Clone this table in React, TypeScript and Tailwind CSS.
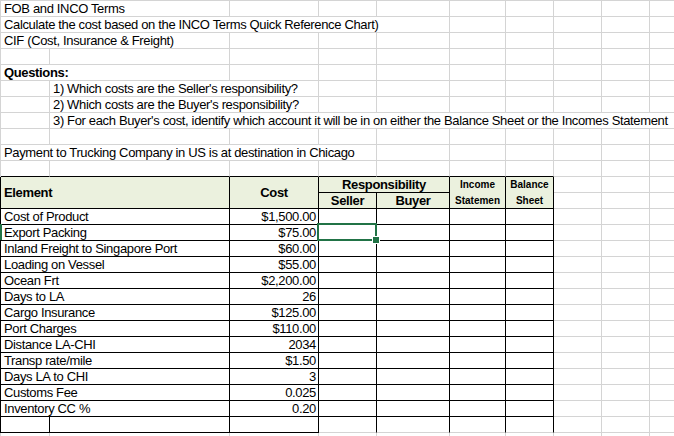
import clsx from "clsx";

// column template: A..I fixed, J takes the rest (widths include the right gridline)
const GRID = "grid grid-cols-[49px_180px_89px_58px_73px_56px_48px_48px_48px_1fr]";

const SPAN: Record<number, string> = {
  1: "col-span-1",
  2: "col-span-2",
  3: "col-span-3",
  4: "col-span-4",
  5: "col-span-5",
  9: "col-span-9",
};

type Cell = { span?: number; text?: string; bold?: boolean; blackBottom?: boolean };

const ITEMS: [string, string][] = [
  ["Cost of Product", "$1,500.00"],
  ["Export Packing", "$75.00"],
  ["Inland Freight to Singapore Port", "$60.00"],
  ["Loading on Vessel", "$55.00"],
  ["Ocean Frt", "$2,200.00"],
  ["Days to LA", "26"],
  ["Cargo Insurance", "$125.00"],
  ["Port Charges", "$110.00"],
  ["Distance LA-CHI", "2034"],
  ["Transp rate/mile", "$1.50"],
  ["Days LA to CHI", "3"],
  ["Customs Fee", "0.025"],
  ["Inventory CC %", "0.20"],
];

function TextRow({ cells = [], blackBottomTo = 0 }: { cells?: Cell[]; blackBottomTo?: number }) {
  const used = cells.reduce((n, c) => n + (c.span ?? 1), 0);
  const rest: Cell[] = Array.from({ length: 10 - used }, () => ({}));
  return (
    <div className={clsx(GRID, "h-[16px] border-l border-[#d4d4d4]")}>
      {[...cells, ...rest].map((c, i) => (
        <div
          key={i}
          className={clsx(
            "overflow-hidden whitespace-nowrap border-r border-b border-[#d4d4d4] pl-[3px] leading-[15px] last:border-r-0",
            SPAN[c.span ?? 1],
            c.bold && "font-bold",
            i < blackBottomTo && "border-b-black"
          )}
        >
          {c.text}
        </div>
      ))}
    </div>
  );
}

function GrayCells() {
  return (
    <>
      <div className="border-r border-b border-[#d4d4d4]" />
      <div className="border-r border-b border-[#d4d4d4]" />
      <div className="border-b border-[#d4d4d4]" />
    </>
  );
}

function DataRow({ label, cost }: { label: string; cost: string }) {
  return (
    <div className={clsx(GRID, "h-[16px] border-l border-black")}>
      <div className="col-span-2 overflow-hidden whitespace-nowrap border-r border-b border-black pl-[3px] leading-[15px]">
        {label}
      </div>
      <div className="border-r border-b border-black pr-[2px] text-right leading-[15px]">{cost}</div>
      <div className="border-r border-b border-black" />
      <div className="border-r border-b border-black" />
      <div className="border-r border-b border-black" />
      <div className="border-r border-b border-black" />
      <GrayCells />
    </div>
  );
}

function HeaderRows() {
  const head = "flex items-center border-r border-b border-black bg-[#ebf1de] font-bold";
  return (
    <div className={clsx(GRID, "grid-rows-[16px_16px] border-l border-black")}>
      <div className={clsx(head, "col-span-2 row-span-2 pl-[3px]")}>Element</div>
      <div className={clsx(head, "row-span-2 justify-center")}>Cost</div>
      <div className={clsx(head, "col-span-2 justify-center leading-[15px]")}>Responsibility</div>
      <div className={clsx(head, "col-start-6 row-span-2 flex-col justify-center text-[10px] leading-[16px] tracking-normal")}>
        <span>Income</span>
        <span className="w-full overflow-hidden whitespace-nowrap text-center">Statemen</span>
      </div>
      <div className={clsx(head, "col-start-7 row-span-2 flex-col justify-center text-[10px] leading-[16px] tracking-normal")}>
        <span>Balance</span>
        <span>Sheet</span>
      </div>
      <div className="col-start-8 row-start-1 border-r border-b border-[#d4d4d4]" />
      <div className="col-start-9 row-start-1 border-r border-b border-[#d4d4d4]" />
      <div className="col-start-10 row-start-1 border-b border-[#d4d4d4]" />
      <div className={clsx(head, "col-start-4 row-start-2 justify-center leading-[15px]")}>Seller</div>
      <div className={clsx(head, "col-start-5 row-start-2 justify-center leading-[15px]")}>Buyer</div>
      <div className="col-start-8 row-start-2 border-r border-b border-[#d4d4d4]" />
      <div className="col-start-9 row-start-2 border-r border-b border-[#d4d4d4]" />
      <div className="col-start-10 row-start-2 border-b border-[#d4d4d4]" />
    </div>
  );
}

export default function App() {
  return (
    <div className="relative h-[436px] w-[674px] overflow-hidden bg-white font-['Liberation_Sans',Arial,sans-serif] text-[13px] tracking-[-0.35px] text-black">
      <div className="border-t border-[#d4d4d4]">
        <TextRow cells={[{ span: 2, text: "FOB and INCO Terms" }]} />
        <TextRow cells={[{ span: 5, text: "Calculate the cost based on the INCO Terms Quick Reference Chart)" }]} />
        <TextRow cells={[{ span: 2, text: "CIF (Cost, Insurance & Freight)" }]} />
        <TextRow />
        <TextRow cells={[{ span: 2, text: "Questions:", bold: true }]} />
        <TextRow cells={[{}, { span: 2, text: "1) Which costs are the Seller's responsibility?" }]} />
        <TextRow cells={[{}, { span: 2, text: "2) Which costs are the Buyer's responsibility?" }]} />
        <TextRow
          cells={[
            {},
            {
              span: 9,
              text: "3) For each Buyer's cost, identify which account it will be in on either the Balance Sheet or the Incomes Statement",
            },
          ]}
        />
        <TextRow />
        <TextRow cells={[{ span: 4, text: "Payment to Trucking Company in US is at destination in Chicago" }]} />
        <TextRow blackBottomTo={7} />

        <HeaderRows />
        {ITEMS.map(([label, cost]) => (
          <DataRow key={label} label={label} cost={cost} />
        ))}

        {/* empty bordered row under the list */}
        <div className={clsx(GRID, "h-[16px] border-l border-black")}>
          <div className="border-r border-b border-black" />
          <div className="border-r border-b border-black" />
          <div className="border-r border-b border-black" />
          <div className="border-r border-b border-r-black border-b-[#d4d4d4]" />
          <div className="border-r border-b border-r-black border-b-[#d4d4d4]" />
          <div className="border-r border-b border-r-black border-b-[#d4d4d4]" />
          <div className="border-r border-b border-r-black border-b-[#d4d4d4]" />
          <GrayCells />
        </div>
        <TextRow />
      </div>

      {/* active cell selection */}
      <div className="absolute left-[317px] top-[223px] h-[18px] w-[60px] border-2 border-[#217346]" />
      <div className="absolute left-[372px] top-[236px] h-[8px] w-[8px] border border-white bg-[#217346]" />
      <div className="absolute left-0 top-[224px] h-[16px] w-[2px] bg-[#217346]" />
    </div>
  );
}
